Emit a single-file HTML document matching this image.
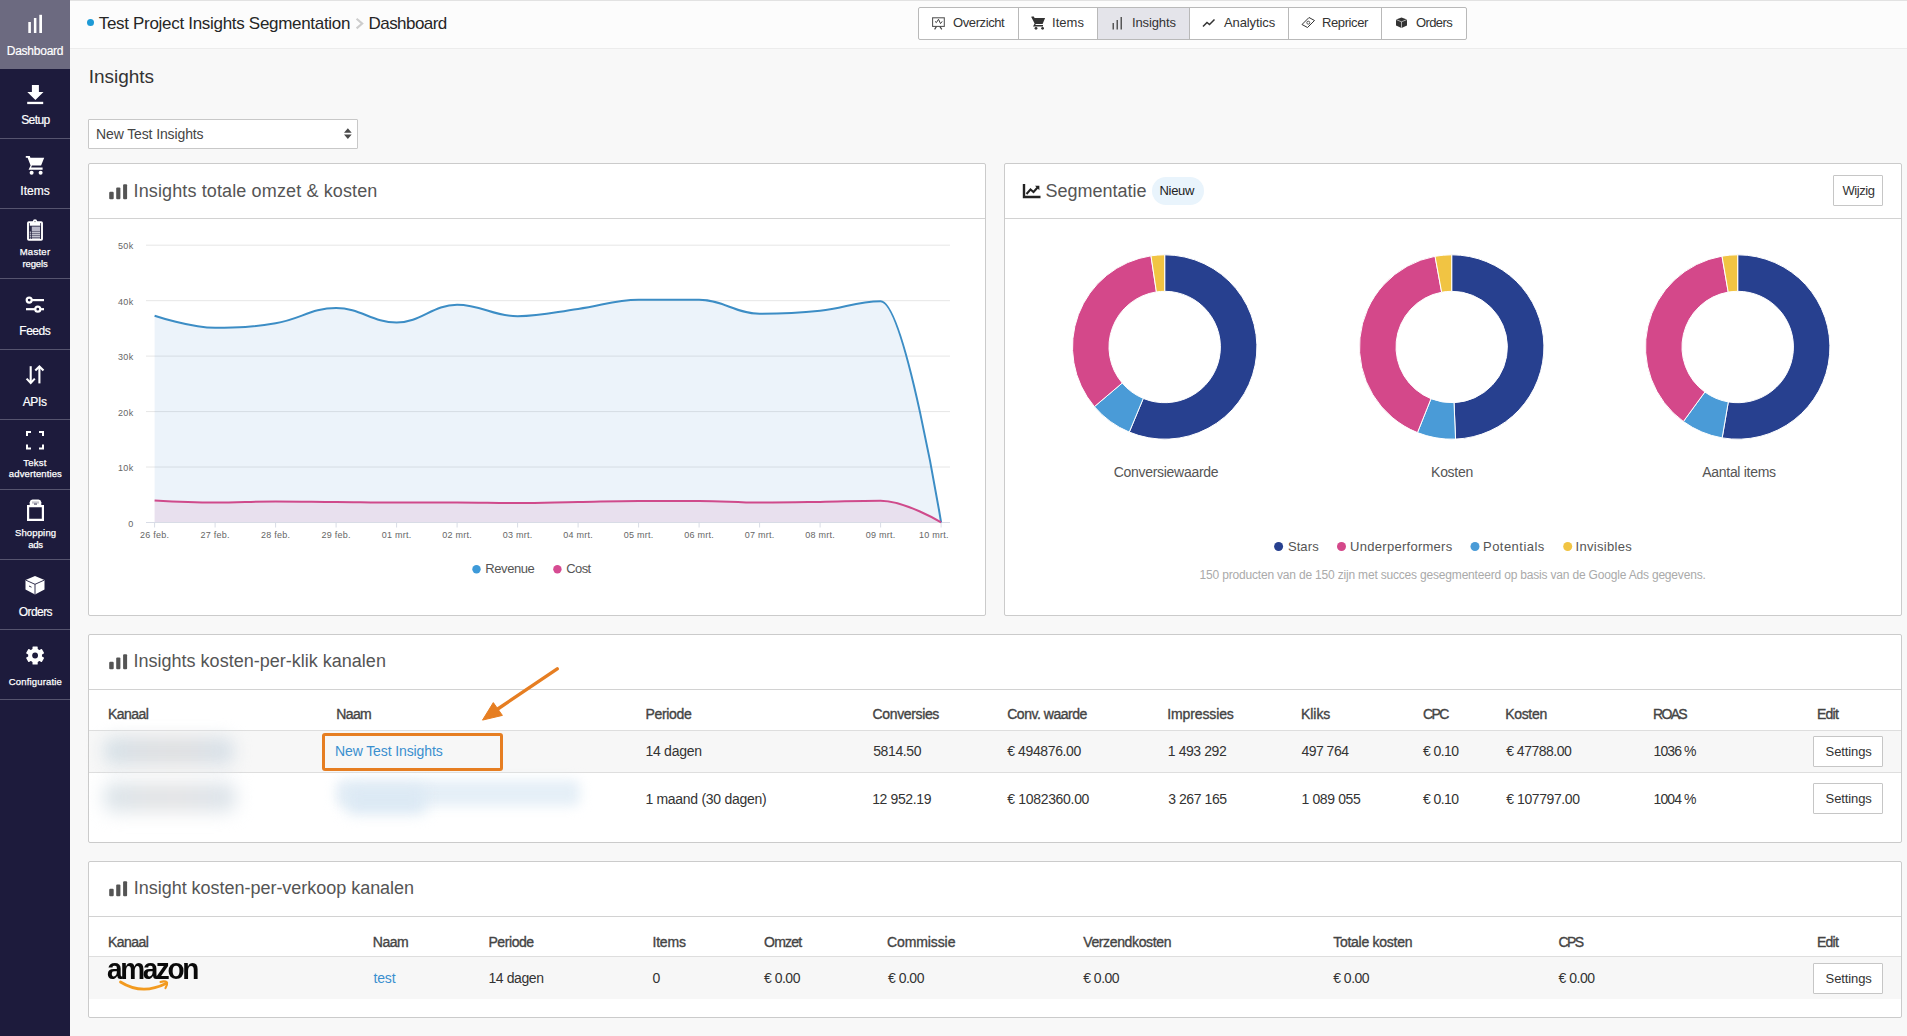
<!DOCTYPE html><html><head><meta charset="utf-8"><title>Insights</title>
<style>
html,body{margin:0;padding:0;}
body{width:1907px;height:1036px;overflow:hidden;position:relative;background:#f8f8f8;font-family:"Liberation Sans",sans-serif;}
.t{position:absolute;white-space:nowrap;line-height:1;}
svg{position:absolute;overflow:visible;}
</style></head><body>
<div style="position:absolute;left:70px;top:0px;width:1837px;height:48px;background:#fcfcfc;border-bottom:1px solid #ececec;box-sizing:border-box;height:49px;"></div>
<div style="position:absolute;left:70px;top:0px;width:1837px;height:1px;background:#e2e2e2;"></div>
<div style="position:absolute;left:0px;top:0px;width:70px;height:1036px;background:#1d1b3c;"></div>
<div style="position:absolute;left:0px;top:0px;width:70px;height:69px;background:#6c6a80;"></div>
<div style="position:absolute;left:0px;top:138px;width:70px;height:1px;background:#56546f;"></div>
<div style="position:absolute;left:0px;top:208px;width:70px;height:1px;background:#56546f;"></div>
<div style="position:absolute;left:0px;top:278px;width:70px;height:1px;background:#56546f;"></div>
<div style="position:absolute;left:0px;top:349px;width:70px;height:1px;background:#56546f;"></div>
<div style="position:absolute;left:0px;top:419px;width:70px;height:1px;background:#56546f;"></div>
<div style="position:absolute;left:0px;top:489px;width:70px;height:1px;background:#56546f;"></div>
<div style="position:absolute;left:0px;top:559px;width:70px;height:1px;background:#56546f;"></div>
<div style="position:absolute;left:0px;top:629px;width:70px;height:1px;background:#56546f;"></div>
<div style="position:absolute;left:0px;top:699px;width:70px;height:1px;background:#56546f;"></div>
<div class="t" id="k_sl_Dashboard" style="left:0.00px;top:44.5px;font-size:12px;color:#fff;letter-spacing:-0.250px;width:70px;text-align:center;-webkit-text-stroke:0.2px #fff;">Dashboard</div>
<div class="t" id="k_sl_Setup" style="left:0.40px;top:114.3px;font-size:12px;color:#fff;letter-spacing:-0.600px;width:70px;text-align:center;-webkit-text-stroke:0.2px #fff;">Setup</div>
<div class="t" id="k_sl_Items" style="left:0.00px;top:184.6px;font-size:12px;color:#fff;width:70px;text-align:center;-webkit-text-stroke:0.2px #fff;">Items</div>
<div class="t" id="k_sl_Master" style="left:0.00px;top:246.9px;font-size:9.5px;color:#fff;letter-spacing:0.280px;width:70px;text-align:center;-webkit-text-stroke:0.25px #fff;">Master</div>
<div class="t" id="k_sl_regels" style="left:0.00px;top:258.8px;font-size:9.5px;color:#fff;letter-spacing:-0.120px;width:70px;text-align:center;-webkit-text-stroke:0.25px #fff;">regels</div>
<div class="t" id="k_sl_Feeds" style="left:-0.20px;top:324.5px;font-size:12px;color:#fff;letter-spacing:-0.450px;width:70px;text-align:center;-webkit-text-stroke:0.2px #fff;">Feeds</div>
<div class="t" id="k_sl_APIs" style="left:-0.40px;top:395.6px;font-size:12px;color:#fff;letter-spacing:-0.399px;width:70px;text-align:center;-webkit-text-stroke:0.2px #fff;">APIs</div>
<div class="t" id="k_sl_Tekst" style="left:0.00px;top:457.9px;font-size:9.5px;color:#fff;letter-spacing:0.250px;width:70px;text-align:center;-webkit-text-stroke:0.25px #fff;">Tekst</div>
<div class="t" id="k_sl_advertenties" style="left:0.40px;top:469.0px;font-size:9.5px;color:#fff;letter-spacing:0.110px;width:70px;text-align:center;-webkit-text-stroke:0.25px #fff;">advertenties</div>
<div class="t" id="k_sl_Shopping" style="left:0.60px;top:528.0px;font-size:9.5px;color:#fff;letter-spacing:0.143px;width:70px;text-align:center;-webkit-text-stroke:0.25px #fff;">Shopping</div>
<div class="t" id="k_sl_ads" style="left:0.40px;top:539.7px;font-size:9.5px;color:#fff;letter-spacing:-0.300px;width:70px;text-align:center;-webkit-text-stroke:0.25px #fff;">ads</div>
<div class="t" id="k_sl_Orders" style="left:0.40px;top:605.7px;font-size:12px;color:#fff;letter-spacing:-0.560px;width:70px;text-align:center;-webkit-text-stroke:0.2px #fff;">Orders</div>
<div class="t" id="k_sl_Configuratie" style="left:0.40px;top:676.9px;font-size:9.5px;color:#fff;letter-spacing:0.163px;width:70px;text-align:center;-webkit-text-stroke:0.25px #fff;">Configuratie</div>
<svg width="70" height="70" style="left:0;top:0"><rect x="28.3" y="22" width="2.6" height="11" fill="#ffffff"/><rect x="33.9" y="18" width="2.5" height="15" fill="#ffffff"/><rect x="39.3" y="14.8" width="2.7" height="18.2" fill="#ffffff"/></svg>
<svg width="70" height="70" style="left:0;top:69px"><path d="M31.9,16.1 h7 v6.9 h4.6 l-8.1,8 l-8.1,-8 h4.6 z" fill="#ffffff"/><rect x="27.2" y="32.8" width="16" height="2.3" fill="#ffffff"/></svg>
<svg width="70" height="70" style="left:0;top:139px"><path d="M25.8,16.9 L29.8,16.9 L30.4,18.8 L44.2,18.8 L41.1,26.6 L31.9,26.6 L31.1,28.4 L42.6,28.4 L42.6,30.7 L28.6,30.7 L30.6,26.6 L27.6,18.8 L25.8,18.8 Z" fill="#ffffff"/><circle cx="31.6" cy="33.7" r="2" fill="#ffffff"/><circle cx="40.6" cy="33.7" r="2" fill="#ffffff"/></svg>
<svg width="70" height="70" style="left:0;top:209px"><rect x="28" y="13.3" width="14" height="17.4" rx="0.8" fill="none" stroke="#ffffff" stroke-width="1.9"/><rect x="29" y="14.3" width="12" height="15.4" fill="#2a2946"/><rect x="31.8" y="17.6" width="8.2" height="4.4" fill="#b9b8c8"/><g fill="#e8e8f0"><rect x="31.8" y="22.6" width="8.2" height="1.2"/><rect x="31.8" y="24.6" width="8.2" height="1.2"/><rect x="31.8" y="26.6" width="8.2" height="1.2"/><rect x="31.8" y="28.6" width="8.2" height="1.1"/><rect x="29.8" y="22.6" width="1.1" height="1.2"/><rect x="29.8" y="24.6" width="1.1" height="1.2"/><rect x="29.8" y="26.6" width="1.1" height="1.2"/><rect x="29.8" y="28.6" width="1.1" height="1.1"/></g><rect x="29.8" y="13.5" width="10.4" height="3.2" fill="#ffffff"/><circle cx="35" cy="12.3" r="2.1" fill="#ffffff"/><circle cx="35" cy="12.6" r="0.55" fill="#555"/></svg>
<svg width="70" height="70" style="left:0;top:279px"><g stroke="#ffffff" stroke-width="2.2" fill="none"><line x1="31.8" y1="21.1" x2="44" y2="21.1"/><circle cx="29.2" cy="21.1" r="2.5"/><line x1="26" y1="30.2" x2="35.2" y2="30.2"/><line x1="40.4" y1="30.2" x2="44" y2="30.2"/><circle cx="37.8" cy="30.2" r="2.5"/></g></svg>
<svg width="70" height="70" style="left:0;top:349px"><g stroke="#ffffff" stroke-width="2.1" fill="none" stroke-linecap="butt"><line x1="30.7" y1="17.2" x2="30.7" y2="33.6"/><polyline points="26.6,29.6 30.7,33.9 34.8,29.6"/><line x1="39.4" y1="17.8" x2="39.4" y2="34.4"/><polyline points="35.3,21.6 39.4,17.4 43.5,21.6"/></g></svg>
<svg width="70" height="70" style="left:0;top:419px"><g stroke="#ffffff" stroke-width="2" fill="none"><polyline points="27,17 27,13 31,13"/><polyline points="39,13 43,13 43,17"/><polyline points="27,25.5 27,29.5 31,29.5"/><polyline points="39,29.5 43,29.5 43,25.5"/></g></svg>
<svg width="70" height="70" style="left:0;top:489px"><path d="M28.1,17.1 h14.8 v13.8 h-14.8 z" fill="none" stroke="#ffffff" stroke-width="2.2"/><path d="M29.7,16.4 L29.7,13.2 Q30,10.8 32.5,10.6 L38.5,10.6 Q41,10.8 41.3,13.2 L41.3,16.4 Z" fill="#ffffff"/><rect x="32" y="12.4" width="7" height="2.2" fill="#c4c4cc"/><rect x="34" y="14.6" width="3" height="0.9" fill="#1d1b3c"/></svg>
<svg width="70" height="70" style="left:0;top:559px"><path d="M35,17 l9.5,4 v9.5 l-9.5,5 l-9.5,-5 v-9.5 z" fill="#ffffff"/><path d="M25.5,21 l9.5,4.3 l9.5,-4.3 M35,25.3 v10" stroke="#1d1b3c" stroke-width="0.9" fill="none"/><line x1="29" y1="27" x2="31.5" y2="28.2" stroke="#1d1b3c" stroke-width="0.9"/></svg>
<svg width="70" height="70" style="left:0;top:629px"><g fill="#ffffff" transform="translate(35.1,26.5)"><rect x="-2.6" y="-9.1" width="5.2" height="4.5" rx="0.6" transform="rotate(0)"/><rect x="-2.6" y="-9.1" width="5.2" height="4.5" rx="0.6" transform="rotate(60)"/><rect x="-2.6" y="-9.1" width="5.2" height="4.5" rx="0.6" transform="rotate(120)"/><rect x="-2.6" y="-9.1" width="5.2" height="4.5" rx="0.6" transform="rotate(180)"/><rect x="-2.6" y="-9.1" width="5.2" height="4.5" rx="0.6" transform="rotate(240)"/><rect x="-2.6" y="-9.1" width="5.2" height="4.5" rx="0.6" transform="rotate(300)"/><circle r="6.9"/></g><circle cx="35.1" cy="26.5" r="2.9" fill="#1d1b3c"/></svg>
<svg width="10" height="10" style="left:86.7px;top:18.9px"><circle cx="3.5" cy="3.5" r="3.5" fill="#1e9ad6"/></svg>
<div class="t" id="k_hdr" style="left:98.70px;top:15.1px;font-size:17px;color:#262626;letter-spacing:-0.303px;">Test Project Insights Segmentation</div>
<svg width="12" height="16" style="left:354px;top:16px"><polyline points="2.6,2.8 8.2,7.6 2.6,12.4" fill="none" stroke="#cdcdcd" stroke-width="2.1"/></svg>
<div class="t" id="k_hdrdash" style="left:368.50px;top:15.1px;font-size:17px;color:#262626;letter-spacing:-0.550px;">Dashboard</div>
<div style="position:absolute;left:918px;top:7px;width:549px;height:33px;background:#fff;border:1px solid #b9b9b9;border-radius:2px;box-sizing:border-box;"></div>
<div style="position:absolute;left:1098px;top:8px;width:91px;height:31px;background:#e4e4ea;"></div>
<div style="position:absolute;left:1018px;top:7px;width:1px;height:33px;background:#b9b9b9;"></div>
<div style="position:absolute;left:1097px;top:7px;width:1px;height:33px;background:#b9b9b9;"></div>
<div style="position:absolute;left:1189px;top:7px;width:1px;height:33px;background:#b9b9b9;"></div>
<div style="position:absolute;left:1288px;top:7px;width:1px;height:33px;background:#b9b9b9;"></div>
<div style="position:absolute;left:1381px;top:7px;width:1px;height:33px;background:#b9b9b9;"></div>
<div class="t" id="k_tab_Overzicht" style="left:953.00px;top:16.3px;font-size:13px;color:#333;letter-spacing:-0.398px;">Overzicht</div>
<div class="t" id="k_tab_Items" style="left:1052.00px;top:16.3px;font-size:13px;color:#333;letter-spacing:0.050px;">Items</div>
<div class="t" id="k_tab_Insights" style="left:1132.00px;top:16.3px;font-size:13px;color:#333;letter-spacing:-0.129px;">Insights</div>
<div class="t" id="k_tab_Analytics" style="left:1224.00px;top:16.3px;font-size:13px;color:#333;letter-spacing:-0.100px;">Analytics</div>
<div class="t" id="k_tab_Repricer" style="left:1322.00px;top:16.3px;font-size:13px;color:#333;letter-spacing:-0.396px;">Repricer</div>
<div class="t" id="k_tab_Orders" style="left:1416.00px;top:16.3px;font-size:13px;color:#333;letter-spacing:-0.600px;">Orders</div>
<svg width="20" height="20" style="left:930px;top:14px"><rect x="2.6" y="3.8" width="11.7" height="8.6" fill="none" stroke="#505050" stroke-width="1.05"/><polyline points="5,7.4 6.4,8.6 8.5,5.3 10.5,9.6 12.2,7.4" fill="none" stroke="#404040" stroke-width="1"/><line x1="6.4" y1="12.6" x2="4.6" y2="15.4" stroke="#404040" stroke-width="1.1"/><line x1="9.9" y1="12.6" x2="11.8" y2="15.4" stroke="#404040" stroke-width="1.1"/></svg>
<svg width="20" height="20" style="left:1030px;top:14px"><path d="M1.5,2.5 h2.3 l0.8,1.6 h10.5 l-2.5,5.8 h-6.8 l-0.6,1.1 h7.8 v1.5 h-10 l1.6,-2.9 l-2.8,-5.6 h-0.3 z" fill="#333"/><circle cx="6" cy="14.3" r="1.4" fill="#333"/><circle cx="12.6" cy="14.3" r="1.4" fill="#333"/></svg>
<svg width="20" height="20" style="left:1110px;top:14px"><rect x="2.6" y="9" width="1.2" height="6.5" fill="#333"/><rect x="6.6" y="6" width="1.2" height="9.5" fill="#333"/><rect x="10.6" y="3" width="1.2" height="12.5" fill="#333"/></svg>
<svg width="20" height="20" style="left:1200px;top:14px"><polyline points="3,12.5 7,8.5 9.5,10.5 14.5,5.5" fill="none" stroke="#333" stroke-width="1.5"/></svg>
<svg width="20" height="20" style="left:1300px;top:14px"><path d="M2,10.5 l7,-7 l5.5,3 l-7,7 z" fill="none" stroke="#333" stroke-width="1"/><circle cx="8.3" cy="8.7" r="1.5" fill="none" stroke="#333" stroke-width="0.8"/></svg>
<svg width="20" height="20" style="left:1394px;top:14px"><path d="M7.5,3.5 l5.5,2 v6 l-5.5,2.5 l-5.5,-2.5 v-6 z" fill="#333"/><path d="M2,5.5 l5.5,2.3 l5.5,-2.3 M7.5,7.8 v6" stroke="#fff" stroke-width="0.6" fill="none"/></svg>
<div class="t" id="k_ptitle" style="left:88.70px;top:66.8px;font-size:19px;color:#333;letter-spacing:-0.031px;">Insights</div>
<div style="position:absolute;left:88px;top:119px;width:270px;height:30px;background:#fff;border:1px solid #c8c8c8;border-radius:1px;box-sizing:border-box;"></div>
<div class="t" id="k_sel" style="left:96.00px;top:126.8px;font-size:14px;color:#444;letter-spacing:-0.117px;">New Test Insights</div>
<svg width="12" height="16" style="left:342px;top:126px"><path d="M2,6.8 L5.85,2.2 L9.7,6.8 z M2,8.4 L9.7,8.4 L5.85,13 z" fill="#4a4a4a"/></svg>
<div style="position:absolute;left:88px;top:163px;width:898px;height:453px;background:#fff;border:1px solid #cbcbcb;border-radius:2px;box-sizing:border-box;"></div>
<div style="position:absolute;left:89px;top:218px;width:896px;height:1px;background:#d2d2d2;"></div>
<svg width="20" height="20" style="left:109px;top:183.5px"><rect x="0.2" y="7.8" width="4.5" height="7.5" rx="1.1" fill="#545454"/><rect x="7.2" y="3.4" width="4.2" height="11.9" rx="1" fill="#545454"/><rect x="14.1" y="0.2" width="4" height="15.1" rx="1" fill="#545454"/></svg>
<div class="t" id="k_ctitle" style="left:133.50px;top:181.8px;font-size:18px;color:#555;letter-spacing:0.128px;">Insights totale omzet &amp; kosten</div>
<div style="position:absolute;left:1004px;top:163px;width:898px;height:453px;background:#fff;border:1px solid #cbcbcb;border-radius:2px;box-sizing:border-box;"></div>
<div style="position:absolute;left:1005px;top:218px;width:896px;height:1px;background:#d2d2d2;"></div>
<svg width="22" height="18" style="left:1022px;top:182px"><path d="M2,2 v13 h16.5" fill="none" stroke="#222" stroke-width="2.4"/><polyline points="4.5,12 8.5,7.5 11.5,10 16,5" fill="none" stroke="#222" stroke-width="2"/><path d="M13,3.8 h4.4 v4.4 z" fill="#222"/></svg>
<div class="t" id="k_segm" style="left:1045.50px;top:181.5px;font-size:18px;color:#555;">Segmentatie</div>
<div style="position:absolute;left:1151.5px;top:176.5px;width:52px;height:28px;background:#e9f4fc;border-radius:14px;"></div>
<div class="t" id="k_nieuw" style="left:1159.50px;top:184.0px;font-size:13px;color:#222;letter-spacing:-0.325px;">Nieuw</div>
<div style="position:absolute;left:1833px;top:175px;width:50px;height:31px;background:#fff;border:1px solid #c6c6c6;border-radius:1px;box-sizing:border-box;"></div>
<div class="t" id="k_wijzig" style="left:1842.50px;top:184.0px;font-size:13px;color:#333;letter-spacing:-0.460px;">Wijzig</div>
<svg width="1907" height="1036" style="left:0;top:0"><line x1="146" y1="245.2" x2="950" y2="245.2" stroke="#e6e6e6" stroke-width="1"/><line x1="146" y1="300.7" x2="950" y2="300.7" stroke="#e6e6e6" stroke-width="1"/><line x1="146" y1="356.1" x2="950" y2="356.1" stroke="#e6e6e6" stroke-width="1"/><line x1="146" y1="411.6" x2="950" y2="411.6" stroke="#e6e6e6" stroke-width="1"/><line x1="146" y1="467.0" x2="950" y2="467.0" stroke="#e6e6e6" stroke-width="1"/><line x1="146" y1="522.5" x2="950" y2="522.5" stroke="#e6e6e6" stroke-width="1"/><path d="M154.6,315.7 C154.6,315.7 190.9,327.8 215.1,327.8 C239.3,327.8 251.4,327.3 275.6,323.3 C299.8,319.3 311.9,308.0 336.1,308.0 C360.3,308.0 372.4,322.5 396.6,322.5 C420.8,322.5 432.9,304.7 457.1,304.7 C481.3,304.7 493.4,316.2 517.6,316.2 C541.8,316.2 553.9,312.2 578.1,308.9 C602.3,305.6 614.4,299.8 638.6,299.8 C662.8,299.8 674.9,299.8 699.1,299.8 C723.3,299.8 735.4,313.7 759.6,313.7 C783.8,313.7 795.9,313.2 820.1,310.7 C844.3,308.2 856.4,301.2 880.6,301.2 C904.8,301.2 941.1,522.5 941.1,522.5 L941.1,522.5 L154.6,522.5 Z" fill="rgb(50,130,200)" fill-opacity="0.095"/><path d="M154.6,500.5 C154.6,500.5 190.9,502.6 215.1,502.6 C239.3,502.6 251.4,501.4 275.6,501.4 C299.8,501.4 311.9,501.8 336.1,502.0 C360.3,502.2 372.4,502.6 396.6,502.6 C420.8,502.6 432.9,502.4 457.1,502.4 C481.3,502.4 493.4,503.0 517.6,503.0 C541.8,503.0 553.9,502.3 578.1,501.9 C602.3,501.5 614.4,500.9 638.6,500.9 C662.8,500.9 674.9,500.9 699.1,500.9 C723.3,500.9 735.4,502.6 759.6,502.6 C783.8,502.6 795.9,502.3 820.1,501.9 C844.3,501.5 856.4,500.7 880.6,500.7 C904.8,500.7 941.1,522.3 941.1,522.3 L941.1,522.5 L154.6,522.5 Z" fill="rgb(200,60,140)" fill-opacity="0.1"/><line x1="146" y1="522.5" x2="950" y2="522.5" stroke="#d8dce6" stroke-width="1"/><line x1="154.6" y1="522.5" x2="154.6" y2="527.5" stroke="#d8dce6" stroke-width="1"/><line x1="215.1" y1="522.5" x2="215.1" y2="527.5" stroke="#d8dce6" stroke-width="1"/><line x1="275.6" y1="522.5" x2="275.6" y2="527.5" stroke="#d8dce6" stroke-width="1"/><line x1="336.1" y1="522.5" x2="336.1" y2="527.5" stroke="#d8dce6" stroke-width="1"/><line x1="396.6" y1="522.5" x2="396.6" y2="527.5" stroke="#d8dce6" stroke-width="1"/><line x1="457.1" y1="522.5" x2="457.1" y2="527.5" stroke="#d8dce6" stroke-width="1"/><line x1="517.6" y1="522.5" x2="517.6" y2="527.5" stroke="#d8dce6" stroke-width="1"/><line x1="578.1" y1="522.5" x2="578.1" y2="527.5" stroke="#d8dce6" stroke-width="1"/><line x1="638.6" y1="522.5" x2="638.6" y2="527.5" stroke="#d8dce6" stroke-width="1"/><line x1="699.1" y1="522.5" x2="699.1" y2="527.5" stroke="#d8dce6" stroke-width="1"/><line x1="759.6" y1="522.5" x2="759.6" y2="527.5" stroke="#d8dce6" stroke-width="1"/><line x1="820.1" y1="522.5" x2="820.1" y2="527.5" stroke="#d8dce6" stroke-width="1"/><line x1="880.6" y1="522.5" x2="880.6" y2="527.5" stroke="#d8dce6" stroke-width="1"/><line x1="941.1" y1="522.5" x2="941.1" y2="527.5" stroke="#d8dce6" stroke-width="1"/><path d="M154.6,315.7 C154.6,315.7 190.9,327.8 215.1,327.8 C239.3,327.8 251.4,327.3 275.6,323.3 C299.8,319.3 311.9,308.0 336.1,308.0 C360.3,308.0 372.4,322.5 396.6,322.5 C420.8,322.5 432.9,304.7 457.1,304.7 C481.3,304.7 493.4,316.2 517.6,316.2 C541.8,316.2 553.9,312.2 578.1,308.9 C602.3,305.6 614.4,299.8 638.6,299.8 C662.8,299.8 674.9,299.8 699.1,299.8 C723.3,299.8 735.4,313.7 759.6,313.7 C783.8,313.7 795.9,313.2 820.1,310.7 C844.3,308.2 856.4,301.2 880.6,301.2 C904.8,301.2 941.1,522.5 941.1,522.5" fill="none" stroke="#3c8dc5" stroke-width="2"/><path d="M154.6,500.5 C154.6,500.5 190.9,502.6 215.1,502.6 C239.3,502.6 251.4,501.4 275.6,501.4 C299.8,501.4 311.9,501.8 336.1,502.0 C360.3,502.2 372.4,502.6 396.6,502.6 C420.8,502.6 432.9,502.4 457.1,502.4 C481.3,502.4 493.4,503.0 517.6,503.0 C541.8,503.0 553.9,502.3 578.1,501.9 C602.3,501.5 614.4,500.9 638.6,500.9 C662.8,500.9 674.9,500.9 699.1,500.9 C723.3,500.9 735.4,502.6 759.6,502.6 C783.8,502.6 795.9,502.3 820.1,501.9 C844.3,501.5 856.4,500.7 880.6,500.7 C904.8,500.7 941.1,522.3 941.1,522.3" fill="none" stroke="#cf4a8b" stroke-width="2"/></svg>
<div class="t" style="left:93.50px;top:242.2px;font-size:9px;color:#666;letter-spacing:0.350px;width:40px;text-align:right;">50k</div>
<div class="t" style="left:93.50px;top:297.6px;font-size:9px;color:#666;letter-spacing:0.350px;width:40px;text-align:right;">40k</div>
<div class="t" style="left:93.50px;top:353.1px;font-size:9px;color:#666;letter-spacing:0.350px;width:40px;text-align:right;">30k</div>
<div class="t" style="left:93.50px;top:408.6px;font-size:9px;color:#666;letter-spacing:0.350px;width:40px;text-align:right;">20k</div>
<div class="t" style="left:93.50px;top:464.0px;font-size:9px;color:#666;letter-spacing:0.350px;width:40px;text-align:right;">10k</div>
<div class="t" style="left:93.50px;top:519.5px;font-size:9px;color:#666;letter-spacing:0.350px;width:40px;text-align:right;">0</div>
<div class="t" style="left:124.60px;top:531.4px;font-size:9px;color:#666;letter-spacing:0.250px;width:60px;text-align:center;">26 feb.</div>
<div class="t" style="left:185.10px;top:531.4px;font-size:9px;color:#666;letter-spacing:0.250px;width:60px;text-align:center;">27 feb.</div>
<div class="t" style="left:245.60px;top:531.4px;font-size:9px;color:#666;letter-spacing:0.250px;width:60px;text-align:center;">28 feb.</div>
<div class="t" style="left:306.10px;top:531.4px;font-size:9px;color:#666;letter-spacing:0.250px;width:60px;text-align:center;">29 feb.</div>
<div class="t" style="left:366.60px;top:531.4px;font-size:9px;color:#666;letter-spacing:0.250px;width:60px;text-align:center;">01 mrt.</div>
<div class="t" style="left:427.10px;top:531.4px;font-size:9px;color:#666;letter-spacing:0.250px;width:60px;text-align:center;">02 mrt.</div>
<div class="t" style="left:487.60px;top:531.4px;font-size:9px;color:#666;letter-spacing:0.250px;width:60px;text-align:center;">03 mrt.</div>
<div class="t" style="left:548.10px;top:531.4px;font-size:9px;color:#666;letter-spacing:0.250px;width:60px;text-align:center;">04 mrt.</div>
<div class="t" style="left:608.60px;top:531.4px;font-size:9px;color:#666;letter-spacing:0.250px;width:60px;text-align:center;">05 mrt.</div>
<div class="t" style="left:669.10px;top:531.4px;font-size:9px;color:#666;letter-spacing:0.250px;width:60px;text-align:center;">06 mrt.</div>
<div class="t" style="left:729.60px;top:531.4px;font-size:9px;color:#666;letter-spacing:0.250px;width:60px;text-align:center;">07 mrt.</div>
<div class="t" style="left:790.10px;top:531.4px;font-size:9px;color:#666;letter-spacing:0.250px;width:60px;text-align:center;">08 mrt.</div>
<div class="t" style="left:850.60px;top:531.4px;font-size:9px;color:#666;letter-spacing:0.250px;width:60px;text-align:center;">09 mrt.</div>
<div class="t" style="left:904.00px;top:531.4px;font-size:9px;color:#666;letter-spacing:0.250px;width:60px;text-align:center;">10 mrt.</div>
<svg width="1907" height="10" style="left:0;top:564px"><circle cx="476.5" cy="5.3" r="4.2" fill="#3d9ad9"/><circle cx="557.4" cy="5.3" r="4.2" fill="#d64b92"/></svg>
<div class="t" id="k_rev" style="left:485.30px;top:561.8px;font-size:13px;color:#555;letter-spacing:-0.417px;">Revenue</div>
<div class="t" id="k_cost" style="left:566.30px;top:561.8px;font-size:13px;color:#555;letter-spacing:-0.633px;">Cost</div>
<svg width="1907" height="1036" style="left:0;top:0"><path d="M1164.70,254.80 A92.2,92.2 0 1 1 1129.27,432.12 L1143.29,398.42 A55.7,55.7 0 1 0 1164.70,291.30 Z" fill="#27408f" stroke="#fff" stroke-width="1" stroke-linejoin="round"/><path d="M1129.27,432.12 A92.2,92.2 0 0 1 1094.38,406.63 L1122.22,383.03 A55.7,55.7 0 0 0 1143.29,398.42 Z" fill="#4a9bd7" stroke="#fff" stroke-width="1" stroke-linejoin="round"/><path d="M1094.38,406.63 A92.2,92.2 0 0 1 1150.99,255.82 L1156.42,291.92 A55.7,55.7 0 0 0 1122.22,383.03 Z" fill="#d4488a" stroke="#fff" stroke-width="1" stroke-linejoin="round"/><path d="M1150.99,255.82 A92.2,92.2 0 0 1 1164.70,254.80 L1164.70,291.30 A55.7,55.7 0 0 0 1156.42,291.92 Z" fill="#f1c443" stroke="#fff" stroke-width="1" stroke-linejoin="round"/><path d="M1451.70,254.80 A92.2,92.2 0 0 1 1455.56,439.12 L1454.03,402.65 A55.7,55.7 0 0 0 1451.70,291.30 Z" fill="#27408f" stroke="#fff" stroke-width="1" stroke-linejoin="round"/><path d="M1455.56,439.12 A92.2,92.2 0 0 1 1417.46,432.61 L1431.01,398.72 A55.7,55.7 0 0 0 1454.03,402.65 Z" fill="#4a9bd7" stroke="#fff" stroke-width="1" stroke-linejoin="round"/><path d="M1417.46,432.61 A92.2,92.2 0 0 1 1435.06,256.31 L1441.65,292.22 A55.7,55.7 0 0 0 1431.01,398.72 Z" fill="#d4488a" stroke="#fff" stroke-width="1" stroke-linejoin="round"/><path d="M1435.06,256.31 A92.2,92.2 0 0 1 1451.70,254.80 L1451.70,291.30 A55.7,55.7 0 0 0 1441.65,292.22 Z" fill="#f1c443" stroke="#fff" stroke-width="1" stroke-linejoin="round"/><path d="M1737.70,254.80 A92.2,92.2 0 1 1 1722.17,437.88 L1728.32,401.90 A55.7,55.7 0 1 0 1737.70,291.30 Z" fill="#27408f" stroke="#fff" stroke-width="1" stroke-linejoin="round"/><path d="M1722.17,437.88 A92.2,92.2 0 0 1 1683.38,421.50 L1704.88,392.01 A55.7,55.7 0 0 0 1728.32,401.90 Z" fill="#4a9bd7" stroke="#fff" stroke-width="1" stroke-linejoin="round"/><path d="M1683.38,421.50 A92.2,92.2 0 0 1 1722.01,256.15 L1728.22,292.11 A55.7,55.7 0 0 0 1704.88,392.01 Z" fill="#d4488a" stroke="#fff" stroke-width="1" stroke-linejoin="round"/><path d="M1722.01,256.15 A92.2,92.2 0 0 1 1737.70,254.80 L1737.70,291.30 A55.7,55.7 0 0 0 1728.22,292.11 Z" fill="#f1c443" stroke="#fff" stroke-width="1" stroke-linejoin="round"/></svg>
<div class="t" style="left:1066.00px;top:465.1px;font-size:14px;color:#555;letter-spacing:-0.300px;width:200px;text-align:center;">Conversiewaarde</div>
<div class="t" style="left:1352.00px;top:465.1px;font-size:14px;color:#555;letter-spacing:-0.300px;width:200px;text-align:center;">Kosten</div>
<div class="t" style="left:1639.00px;top:465.1px;font-size:14px;color:#555;letter-spacing:-0.300px;width:200px;text-align:center;">Aantal items</div>
<svg width="1907" height="10" style="left:0;top:541px"><circle cx="1278.6" cy="5.5" r="4.5" fill="#27408f"/><circle cx="1341.5" cy="5.5" r="4.5" fill="#d4488a"/><circle cx="1475" cy="5.5" r="4.5" fill="#4a9bd7"/><circle cx="1567.7" cy="5.5" r="4.5" fill="#f1c443"/></svg>
<div class="t" id="k_stars" style="left:1287.90px;top:539.5px;font-size:13px;color:#555;letter-spacing:0.100px;">Stars</div>
<div class="t" id="k_underp" style="left:1350.10px;top:539.5px;font-size:13px;color:#555;letter-spacing:0.277px;">Underperformers</div>
<div class="t" id="k_potent" style="left:1483.00px;top:539.5px;font-size:13px;color:#555;letter-spacing:0.467px;">Potentials</div>
<div class="t" id="k_invis" style="left:1575.50px;top:539.5px;font-size:13px;color:#555;letter-spacing:0.308px;">Invisibles</div>
<div class="t" id="k_note" style="left:1199.60px;top:568.6px;font-size:12px;color:#aaa;letter-spacing:-0.187px;">150 producten van de 150 zijn met succes gesegmenteerd op basis van de Google Ads gegevens.</div>
<div style="position:absolute;left:88px;top:634px;width:1814px;height:209px;background:#fff;border:1px solid #cbcbcb;border-radius:2px;box-sizing:border-box;"></div>
<div style="position:absolute;left:89px;top:689px;width:1812px;height:1px;background:#d2d2d2;"></div>
<svg width="20" height="20" style="left:109px;top:653.8px"><rect x="0.2" y="7.8" width="4.5" height="7.5" rx="1.1" fill="#545454"/><rect x="7.2" y="3.4" width="4.2" height="11.9" rx="1" fill="#545454"/><rect x="14.1" y="0.2" width="4" height="15.1" rx="1" fill="#545454"/></svg>
<div class="t" id="k_kpktitle" style="left:133.50px;top:652.3px;font-size:18px;color:#555;letter-spacing:0.009px;">Insights kosten-per-klik kanalen</div>
<div style="position:absolute;left:89px;top:730px;width:1812px;height:1px;background:#dedede;"></div>
<div style="position:absolute;left:89px;top:731px;width:1812px;height:41px;background:#f7f7f7;"></div>
<div style="position:absolute;left:89px;top:772px;width:1812px;height:1px;background:#dedede;"></div>
<div class="t" id="k_h1_0" style="left:108.00px;top:707.1px;font-size:14px;color:#444;font-weight:500;letter-spacing:-0.560px;-webkit-text-stroke:0.35px #444;">Kanaal</div>
<div class="t" id="k_h1_1" style="left:336.20px;top:707.1px;font-size:14px;color:#444;font-weight:500;letter-spacing:-0.596px;-webkit-text-stroke:0.35px #444;">Naam</div>
<div class="t" id="k_h1_2" style="left:645.40px;top:707.1px;font-size:14px;color:#444;font-weight:500;letter-spacing:-0.296px;-webkit-text-stroke:0.35px #444;">Periode</div>
<div class="t" id="k_h1_3" style="left:872.60px;top:707.1px;font-size:14px;color:#444;font-weight:500;letter-spacing:-0.365px;-webkit-text-stroke:0.35px #444;">Conversies</div>
<div class="t" id="k_h1_4" style="left:1007.20px;top:707.1px;font-size:14px;color:#444;font-weight:500;letter-spacing:-0.466px;-webkit-text-stroke:0.35px #444;">Conv. waarde</div>
<div class="t" id="k_h1_5" style="left:1167.20px;top:707.1px;font-size:14px;color:#444;font-weight:500;letter-spacing:-0.116px;-webkit-text-stroke:0.35px #444;">Impressies</div>
<div class="t" id="k_h1_6" style="left:1301.00px;top:707.1px;font-size:14px;color:#444;font-weight:500;letter-spacing:-0.050px;-webkit-text-stroke:0.35px #444;">Kliks</div>
<div class="t" id="k_h1_7" style="left:1423.00px;top:707.1px;font-size:14px;color:#444;font-weight:500;letter-spacing:-1.600px;-webkit-text-stroke:0.35px #444;">CPC</div>
<div class="t" id="k_h1_8" style="left:1505.20px;top:707.1px;font-size:14px;color:#444;font-weight:500;letter-spacing:-0.320px;-webkit-text-stroke:0.35px #444;">Kosten</div>
<div class="t" id="k_h1_9" style="left:1653.00px;top:707.1px;font-size:14px;color:#444;font-weight:500;letter-spacing:-1.668px;-webkit-text-stroke:0.35px #444;">ROAS</div>
<div class="t" id="k_h1_10" style="left:1817.00px;top:707.1px;font-size:14px;color:#444;font-weight:500;letter-spacing:-0.764px;-webkit-text-stroke:0.35px #444;">Edit</div>
<div class="t" id="k_r1_0" style="left:645.40px;top:744.1px;font-size:14px;color:#333;letter-spacing:-0.253px;">14 dagen</div>
<div class="t" id="k_r1_1" style="left:873.20px;top:744.1px;font-size:14px;color:#333;letter-spacing:-0.389px;">5814.50</div>
<div class="t" id="k_r1_2" style="left:1007.20px;top:744.1px;font-size:14px;color:#333;letter-spacing:-0.380px;">€ 494876.00</div>
<div class="t" id="k_r1_3" style="left:1167.80px;top:744.1px;font-size:14px;color:#333;letter-spacing:-0.423px;">1 493 292</div>
<div class="t" id="k_r1_4" style="left:1301.40px;top:744.1px;font-size:14px;color:#333;letter-spacing:-0.504px;">497 764</div>
<div class="t" id="k_r1_5" style="left:1423.00px;top:744.1px;font-size:14px;color:#333;letter-spacing:-0.580px;">€ 0.10</div>
<div class="t" id="k_r1_6" style="left:1506.20px;top:744.1px;font-size:14px;color:#333;letter-spacing:-0.497px;">€ 47788.00</div>
<div class="t" id="k_r1_7" style="left:1653.60px;top:744.1px;font-size:14px;color:#333;letter-spacing:-0.940px;">1036 %</div>
<div class="t" id="k_r2_0" style="left:645.40px;top:792.1px;font-size:14px;color:#333;letter-spacing:-0.290px;">1 maand (30 dagen)</div>
<div class="t" id="k_r2_1" style="left:872.20px;top:792.1px;font-size:14px;color:#333;letter-spacing:-0.373px;">12 952.19</div>
<div class="t" id="k_r2_2" style="left:1007.20px;top:792.1px;font-size:14px;color:#333;letter-spacing:-0.312px;">€ 1082360.00</div>
<div class="t" id="k_r2_3" style="left:1168.20px;top:792.1px;font-size:14px;color:#333;letter-spacing:-0.427px;">3 267 165</div>
<div class="t" id="k_r2_4" style="left:1301.60px;top:792.1px;font-size:14px;color:#333;letter-spacing:-0.398px;">1 089 055</div>
<div class="t" id="k_r2_5" style="left:1423.00px;top:792.1px;font-size:14px;color:#333;letter-spacing:-0.580px;">€ 0.10</div>
<div class="t" id="k_r2_6" style="left:1506.20px;top:792.1px;font-size:14px;color:#333;letter-spacing:-0.410px;">€ 107797.00</div>
<div class="t" id="k_r2_7" style="left:1653.60px;top:792.1px;font-size:14px;color:#333;letter-spacing:-0.940px;">1004 %</div>
<div class="t" id="k_link" style="left:335.00px;top:743.7px;font-size:14px;color:#3a8fcf;letter-spacing:-0.106px;">New Test Insights</div>
<div style="position:absolute;left:104px;top:737px;width:130px;height:28px;background:linear-gradient(90deg,#d6e1e8 0%,#dde0e3 35%,#dfe0e2 60%,#d9e1e8 90%);filter:blur(8px);border-radius:10px;"></div>
<div style="position:absolute;left:104px;top:782px;width:132px;height:30px;background:linear-gradient(90deg,#dae4ea 0%,#e2e4e6 35%,#e3e4e6 60%,#dde4ea 90%);filter:blur(9px);border-radius:10px;"></div>
<div style="position:absolute;left:336px;top:780px;width:244px;height:26px;background:#e5eff7;filter:blur(6px);border-radius:6px;"></div>
<div style="position:absolute;left:346px;top:786px;width:80px;height:28px;background:#dce9f4;filter:blur(7px);border-radius:6px;"></div>
<div style="position:absolute;left:322px;top:732.5px;width:181px;height:38px;border:3.5px solid #e67e22;border-radius:3px;box-sizing:border-box;"></div>
<svg width="1907" height="1036" style="left:0;top:0"><line x1="557.2" y1="668.8" x2="497" y2="709.5" stroke="#e67e22" stroke-width="3.4" stroke-linecap="round"/><path d="M482.5,720.1 L493.3,702.6 L502.4,715.4 Z" fill="#e67e22" stroke="#e67e22" stroke-width="1" stroke-linejoin="round"/></svg>
<div style="position:absolute;left:1813px;top:736px;width:70px;height:31px;background:#fff;border:1px solid #c6c6c6;border-radius:1px;box-sizing:border-box;"></div>
<div class="t" id="k_settings736" style="left:1825.60px;top:745.0px;font-size:13px;color:#333;letter-spacing:-0.110px;">Settings</div>
<div style="position:absolute;left:1813px;top:783px;width:70px;height:31px;background:#fff;border:1px solid #c6c6c6;border-radius:1px;box-sizing:border-box;"></div>
<div class="t" id="k_settings783" style="left:1825.60px;top:792.0px;font-size:13px;color:#333;letter-spacing:-0.110px;">Settings</div>
<div style="position:absolute;left:88px;top:861px;width:1814px;height:157px;background:#fff;border:1px solid #cbcbcb;border-radius:2px;box-sizing:border-box;"></div>
<div style="position:absolute;left:89px;top:916px;width:1812px;height:1px;background:#d2d2d2;"></div>
<svg width="20" height="20" style="left:109px;top:881px"><rect x="0.2" y="7.8" width="4.5" height="7.5" rx="1.1" fill="#545454"/><rect x="7.2" y="3.4" width="4.2" height="11.9" rx="1" fill="#545454"/><rect x="14.1" y="0.2" width="4" height="15.1" rx="1" fill="#545454"/></svg>
<div class="t" id="k_kpvtitle" style="left:133.80px;top:878.8px;font-size:18px;color:#555;letter-spacing:-0.027px;">Insight kosten-per-verkoop kanalen</div>
<div style="position:absolute;left:89px;top:956px;width:1812px;height:1px;background:#dedede;"></div>
<div style="position:absolute;left:89px;top:957px;width:1812px;height:42px;background:#f7f7f7;"></div>
<div class="t" id="k_h2_0" style="left:108.00px;top:934.7px;font-size:14px;color:#444;font-weight:500;letter-spacing:-0.560px;-webkit-text-stroke:0.35px #444;">Kanaal</div>
<div class="t" id="k_h2_1" style="left:372.80px;top:934.7px;font-size:14px;color:#444;font-weight:500;letter-spacing:-0.503px;-webkit-text-stroke:0.35px #444;">Naam</div>
<div class="t" id="k_h2_2" style="left:488.40px;top:934.7px;font-size:14px;color:#444;font-weight:500;letter-spacing:-0.415px;-webkit-text-stroke:0.35px #444;">Periode</div>
<div class="t" id="k_h2_3" style="left:652.40px;top:934.7px;font-size:14px;color:#444;font-weight:500;letter-spacing:-0.150px;-webkit-text-stroke:0.35px #444;">Items</div>
<div class="t" id="k_h2_4" style="left:764.00px;top:934.7px;font-size:14px;color:#444;font-weight:500;letter-spacing:-0.750px;-webkit-text-stroke:0.35px #444;">Omzet</div>
<div class="t" id="k_h2_5" style="left:887.00px;top:934.7px;font-size:14px;color:#444;font-weight:500;letter-spacing:-0.102px;-webkit-text-stroke:0.35px #444;">Commissie</div>
<div class="t" id="k_h2_6" style="left:1083.20px;top:934.7px;font-size:14px;color:#444;font-weight:500;letter-spacing:-0.366px;-webkit-text-stroke:0.35px #444;">Verzendkosten</div>
<div class="t" id="k_h2_7" style="left:1333.20px;top:934.7px;font-size:14px;color:#444;font-weight:500;letter-spacing:-0.266px;-webkit-text-stroke:0.35px #444;">Totale kosten</div>
<div class="t" id="k_h2_8" style="left:1558.60px;top:934.7px;font-size:14px;color:#444;font-weight:500;letter-spacing:-1.600px;-webkit-text-stroke:0.35px #444;">CPS</div>
<div class="t" id="k_h2_9" style="left:1817.00px;top:934.7px;font-size:14px;color:#444;font-weight:500;letter-spacing:-0.764px;-webkit-text-stroke:0.35px #444;">Edit</div>
<div class="t" id="k_rk_0" style="left:488.40px;top:971.3px;font-size:14px;color:#333;letter-spacing:-0.396px;">14 dagen</div>
<div class="t" id="k_rk_1" style="left:652.40px;top:971.3px;font-size:14px;color:#333;letter-spacing:-0.200px;">0</div>
<div class="t" id="k_rk_2" style="left:764.00px;top:971.3px;font-size:14px;color:#333;letter-spacing:-0.500px;">€ 0.00</div>
<div class="t" id="k_rk_3" style="left:888.00px;top:971.3px;font-size:14px;color:#333;letter-spacing:-0.500px;">€ 0.00</div>
<div class="t" id="k_rk_4" style="left:1083.20px;top:971.3px;font-size:14px;color:#333;letter-spacing:-0.500px;">€ 0.00</div>
<div class="t" id="k_rk_5" style="left:1333.20px;top:971.3px;font-size:14px;color:#333;letter-spacing:-0.500px;">€ 0.00</div>
<div class="t" id="k_rk_6" style="left:1558.60px;top:971.3px;font-size:14px;color:#333;letter-spacing:-0.500px;">€ 0.00</div>
<div class="t" id="k_test" style="left:373.40px;top:971.3px;font-size:14px;color:#3a8fcf;letter-spacing:-0.098px;">test</div>
<div style="position:absolute;left:1813px;top:963px;width:70px;height:31px;background:#fff;border:1px solid #c6c6c6;border-radius:1px;box-sizing:border-box;"></div>
<div class="t" id="k_settings963" style="left:1825.60px;top:972.0px;font-size:13px;color:#333;letter-spacing:-0.110px;">Settings</div>
<div class="t" id="k_amazon" style="left:107.00px;top:956.2px;font-size:28px;color:#0a0a0a;font-weight:700;letter-spacing:-2.400px;transform:scaleY(1.04);transform-origin:0 80%;">amazon</div>
<svg width="90" height="20" style="left:106px;top:976px"><path d="M14.5,6 Q36,19.5 60,7.5" fill="none" stroke="#f29a1f" stroke-width="2.8" stroke-linecap="round"/><path d="M54.5,6 Q59,4.5 61,6.5 Q61.5,9 59.5,12" fill="none" stroke="#f29a1f" stroke-width="2.2" stroke-linecap="round"/></svg>
</body></html>
